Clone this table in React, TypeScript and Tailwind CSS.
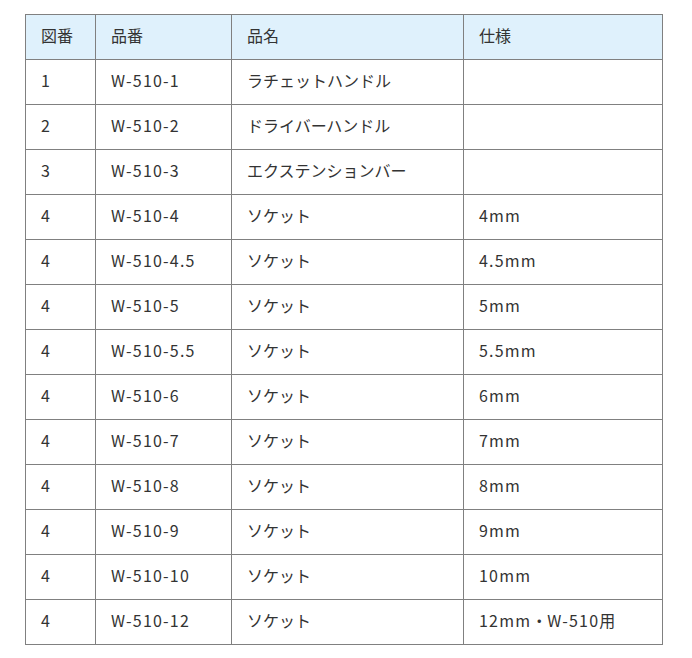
import React from "react";

const rows: [string, string, string, string][] = [
  ["1", "W-510-1", "ラチェットハンドル", ""],
  ["2", "W-510-2", "ドライバーハンドル", ""],
  ["3", "W-510-3", "エクステンションバー", ""],
  ["4", "W-510-4", "ソケット", "4mm"],
  ["4", "W-510-4.5", "ソケット", "4.5mm"],
  ["4", "W-510-5", "ソケット", "5mm"],
  ["4", "W-510-5.5", "ソケット", "5.5mm"],
  ["4", "W-510-6", "ソケット", "6mm"],
  ["4", "W-510-7", "ソケット", "7mm"],
  ["4", "W-510-8", "ソケット", "8mm"],
  ["4", "W-510-9", "ソケット", "9mm"],
  ["4", "W-510-10", "ソケット", "10mm"],
  ["4", "W-510-12", "ソケット", "12mm・W-510用"],
];

const cell =
  "h-[45px] border-r border-b border-[#808080] flex items-center pl-[15px] pb-[4px] text-[16px] text-[#333333] whitespace-pre";

function Runs({ text }: { text: string }) {
  const parts = text.match(/[\x00-\x7f]+|[^\x00-\x7f]+/g) || [];
  return (
    <>
      {parts.map((p, i) =>
        /^[\x00-\x7f]+$/.test(p) ? (
          <span key={i} className="tracking-[1.2px]">
            {p}
          </span>
        ) : (
          <span key={i}>{p}</span>
        )
      )}
    </>
  );
}

export default function App() {
  return (
    <div
      className="w-[692px] h-[658px] bg-white pt-[14px] pl-[25px]"
      style={{ fontFamily: '"Noto Sans CJK JP", "Noto Sans", sans-serif' }}
    >
      <div className="grid grid-cols-[70px_136px_232px_199px] w-[638px] border-l border-t border-[#808080]">
        {["図番", "品番", "品名", "仕様"].map((h) => (
          <div key={h} className={cell + " bg-[#dff1fc]"}>
            {h}
          </div>
        ))}
        {rows.map((r, i) => (
          <React.Fragment key={i}>
            {r.map((c, j) => (
              <div key={j} className={cell + " bg-white"}>
                <Runs text={c} />
              </div>
            ))}
          </React.Fragment>
        ))}
      </div>
    </div>
  );
}
